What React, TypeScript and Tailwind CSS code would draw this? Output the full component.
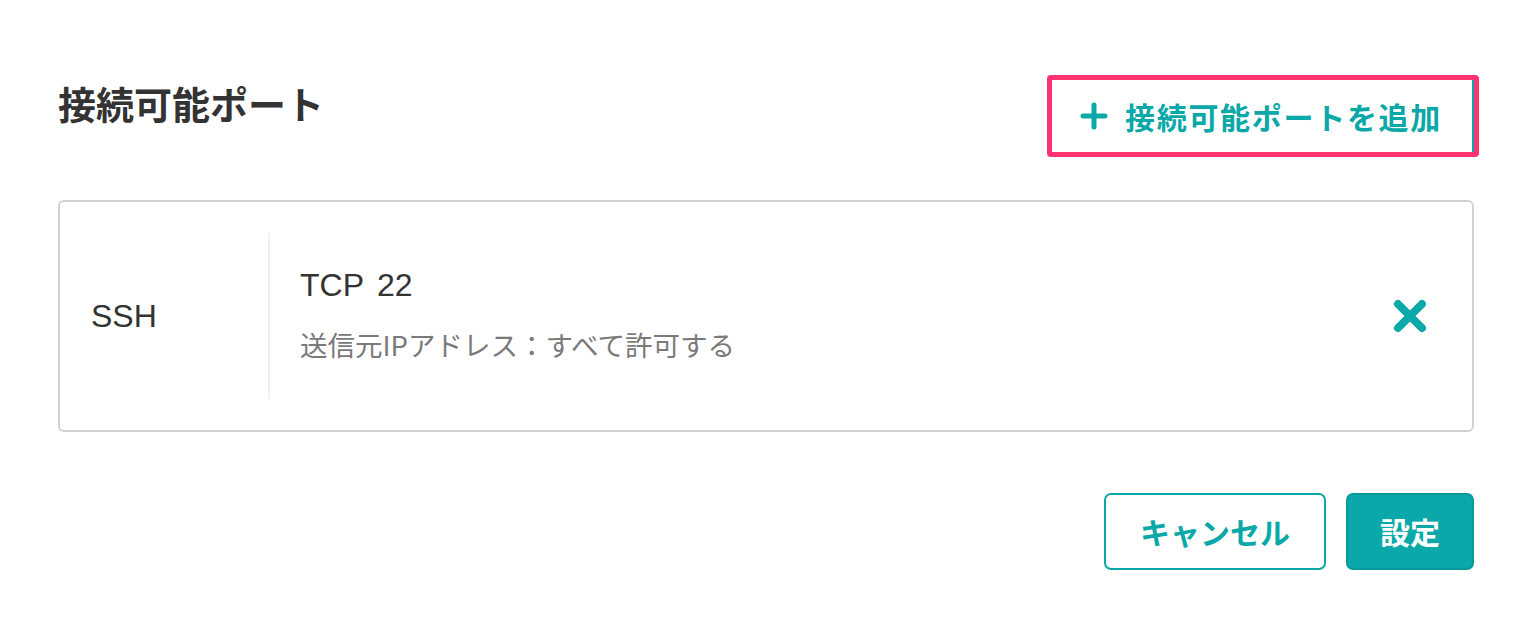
import React from "react";

function PlusIcon() {
  return (
    <svg width="28" height="28" viewBox="0 0 28 28" fill="none">
      <path d="M14 3v22M3 14h22" stroke="#0aa8a8" strokeWidth="5" strokeLinecap="round" />
    </svg>
  );
}

function XIcon() {
  return (
    <svg width="34" height="34" viewBox="0 0 34 34" fill="none">
      <path d="M5 5l24 24M29 5L5 29" stroke="#0aa8a8" strokeWidth="8" strokeLinecap="round" />
    </svg>
  );
}

export default function App() {
  const jp = { fontFamily: '"Noto Sans CJK JP", "Noto Sans", sans-serif' };
  const latin = { fontFamily: '"Liberation Sans", "Noto Sans CJK JP", sans-serif' };
  return (
    <div className="w-[1536px] h-[637px] bg-white pl-[58px] pr-[62px] pt-[75px]" style={jp}>
      <div className="flex items-start justify-between">
        <h1 className="mt-[9px] text-[38px] leading-[38px] font-bold text-[#333333]">接続可能ポート</h1>
        <div className="-mr-[5px] border-[5px] border-[#fe3471] rounded-[4px]">
          <button className="flex h-[72px] w-[422px] items-center whitespace-nowrap border-r-[2px] border-[#0aa8a8] pl-[28px] pr-[10px] text-[30px] font-bold tracking-[1.7px] text-[#0aa8a8]">
            <PlusIcon />
            <span className="ml-[17px] leading-none">接続可能ポートを追加</span>
          </button>
        </div>
      </div>

      <div className="mt-[43px] flex h-[232px] items-stretch rounded-[6px] border-[2px] border-[#d2d2d2] py-[31px]">
        <div className="flex w-[208px] items-center pl-[31px] text-[32px] text-[#333333]" style={latin}>
          SSH
        </div>
        <div className="w-[2px] bg-[#f0f0f0]" />
        <div className="flex flex-1 items-center justify-between pl-[30px] pr-[45px]">
          <div className="flex flex-col pb-[6px]">
            <div className="text-[32px] leading-[40px] text-[#333333]" style={latin}>
              TCP<span className="ml-[13px]">22</span>
            </div>
            <div className="mt-[21px] text-[27.5px] leading-[36px] text-[#7a7a7a]">送信元IPアドレス：すべて許可する</div>
          </div>
          <XIcon />
        </div>
      </div>

      <div className="mt-[61px] flex justify-end gap-[20px]">
        <button className="h-[77px] w-[222px] rounded-[7px] border-[2px] border-[#0aa8a8] text-[30px] font-bold text-[#0aa8a8]">
          キャンセル
        </button>
        <button className="h-[77px] w-[128px] rounded-[7px] border-[2px] border-[#089a9a] bg-[#0aa8a8] text-[30px] font-bold text-white">
          設定
        </button>
      </div>
    </div>
  );
}
